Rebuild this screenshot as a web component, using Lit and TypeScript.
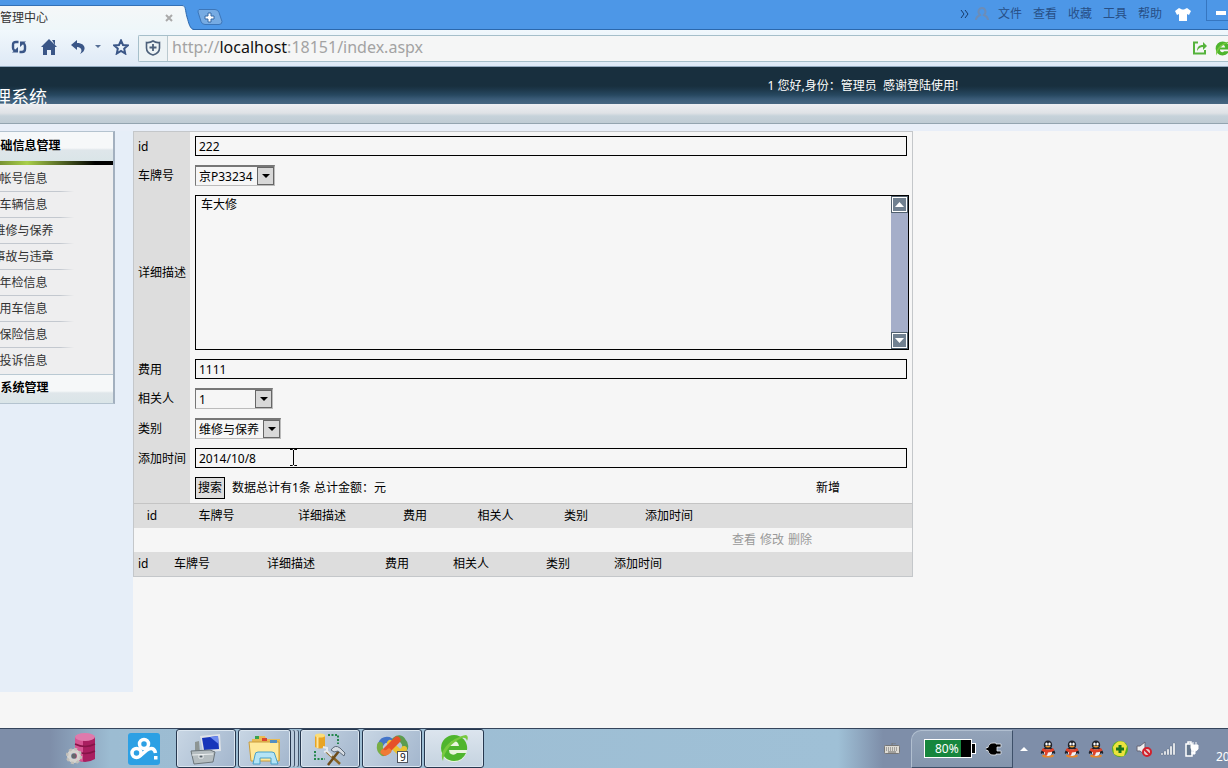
import { LitElement, html, css, svg } from "lit";
import { customElement } from "lit/decorators.js";

const downArrow = html`<svg width="8" height="4" viewBox="0 0 8 4"><path d="M0 0h8L4 4z" fill="#000" /></svg>`;

const penguin = html`<svg class="tray-icon" width="16" height="18" viewBox="0 0 16 18">
  <ellipse cx="8" cy="16" rx="6" ry="1.6" fill="#e8862a" />
  <path d="M1 14c-1-2 1-4 3-6h8c2 2 4 4 3 6l-2-1c-1 2-3 3-5 3s-4-1-5-3z" fill="#20242c" />
  <ellipse cx="8" cy="12.5" rx="4" ry="3.5" fill="#f4f4f4" />
  <ellipse cx="8" cy="5" rx="4.2" ry="4.6" fill="#20242c" />
  <ellipse cx="6.5" cy="4" rx="1.2" ry="1.6" fill="#fff" /><ellipse cx="9.5" cy="4" rx="1.2" ry="1.6" fill="#fff" />
  <path d="M5 6.5q3-1.4 6 0-3 2-6 0z" fill="#f0a030" />
  <path d="M3 8q5 3 10 0l1.500 2.500q-3 2-6.500 2l-1 3H5v-3l-3.500-2z" fill="#e0432a" />
</svg>`;

const browserIcon = svg`
  <path d="M14 1A13 13 0 1 0 14.100 27 13 13 0 0 0 26 19H17q-3 3-6 1-2-1-2-4h18A13 13 0 0 0 14 1zM9 12q1-5 5-5t5 5z" fill="#4fb52e" />
  <path d="M3 27C-2 18 10 4 26 1q3 1 1 6-1-4-5-3C12 8 4 17 3 27z" fill="#77c93f" />`;

@customElement("app-root")
export class AppRoot extends LitElement {
  static styles = css`
    :host {
      display: flex;
      flex-direction: column;
      height: 100vh;
      overflow: hidden;
      background: #f6f6f6;
      color: #000;
      font: 12px/16px "Noto Sans", "Noto Sans CJK SC", sans-serif;
    }
    * { box-sizing: border-box; }
    svg { display: block; flex: none; }
    a { color: inherit; text-decoration: none; }
    button, input, select, textarea { font: inherit; color: inherit; margin: 0; border-radius: 0; outline: 0; }
    .bare { border: 0; background: none; padding: 0; }

    .tabs { display: flex; flex: none; height: 30px; background: #4d97e7; border-bottom: 1px solid #2c68ad; }
    .tab {
      display: flex; align-items: center; justify-content: space-between;
      width: 182px; margin-top: 5px; height: 25px; padding-right: 9px;
      border-top: 1px solid #3470b5; background: linear-gradient(#f5f7f8, #eef7f9); color: #333;
    }
    .tab-edge { margin-top: 5px; }
    .new-tab { margin: 9px 0 0 3px; height: 17px; }
    .menu { display: flex; align-items: center; margin-left: auto; height: 28px; color: #274f86; gap: 11px; }
    .account { display: flex; align-items: center; gap: 6px; margin-right: -2px; }
    .shirt { margin: 0 3px 0 1px; }
    .minimize { width: 22px; height: 21px; align-self: flex-start; border-left: 1px solid #3676c0; border-bottom: 1px solid #3676c0; display: flex; align-items: center; justify-content: flex-end; padding: 5px 2px 0; }
    .minimize i { width: 10px; height: 4px; background: #fff; }
    .toolbar { display: flex; flex: none; height: 37px; align-items: center; padding-left: 11px; background: linear-gradient(#f1f8fc, #dee9f6); border-bottom: 1px solid #93abc0; }
    .tools { display: flex; align-items: center; gap: 14px; width: 127px; flex: none; padding-bottom: 3px; }
    .back { display: flex; align-items: center; gap: 10px; margin-right: -2px; }
    .address { display: flex; flex: 1; min-width: 0; height: 27px; background: #f5f6f6; border: 1px solid #a6bfca; border-right: 0; border-radius: 2px 0 0 2px; align-items: center; }
    .shield { width: 29px; height: 25px; display: grid; place-items: center; border-right: 1px solid #bac9cf; background: #edf3f5; }
    .url { flex: 1; padding: 0 0 2px 4px; font-size: 16px; line-height: 22px; color: #a3a3a3; white-space: nowrap; }
    .url b { font-weight: 400; color: #111; }
    .address-actions { display: flex; gap: 8px; }

    .banner { display: flex; flex: none; justify-content: space-between; height: 37px; overflow: hidden; color: #fff;
      background: linear-gradient(#182f3e 0 19px, #1c3648 22px, #274860 28px, #3a5b77 32px, #466681 37px); }
    .system { margin: 0; width: 47px; display: flex; justify-content: flex-end; padding-top: 18px; font-size: 18px; line-height: 24px; font-weight: 400; white-space: nowrap; }
    .greeting { margin: 11px 0 0; width: 37.500%; white-space: pre; }
    .band { flex: none; height: 20px; background: linear-gradient(#edeef2, #dfe2e6 9px, #c6d2da 12px, #bfcbd4); border-bottom: 1px solid #93a4b0; }

    .work { display: flex; flex: 1; min-height: 0; padding-top: 7px; margin-bottom: 36px; background: linear-gradient(#e8eef8 7px, #f6f6f6 7px); }
    .side { width: 133px; flex: none; overflow: hidden; background: #e6eef8; }
    .accordion { width: 182px; margin-left: -67px; border: 1px solid #b4c3cf; border-right: 2px solid #a3b0bf; background: #eeeeef; text-align: center; }
    .accordion h2 { margin: 0; font-size: 12px; line-height: 27px; height: 29px; font-weight: 700; background: linear-gradient(#f6f8f9 0 16px, #dfe6ea 18px, #dae5e8); padding-left: 2px; }
    .accordion h2.last { border-top: 1px solid #b9c9d3; line-height: 26px; }
    .stripe { height: 4px; background: linear-gradient(90deg, #000, #a9cf4a 52%, #000 90%); }
    .accordion ul { list-style: none; margin: 0; padding: 1px 0 0; }
    .accordion li { height: 26px; line-height: 25px; color: #333; border-bottom: 1px solid; border-image: linear-gradient(90deg, #c3c8cf 70%, #eeeeef 78%) 1; }
    .accordion li:last-child { border-image: none; border-color: transparent; }

    .panel { flex: 0 1 780px; align-self: flex-start; min-width: 0; border: 1px solid #c4c7ca; }
    .field { display: grid; grid-template-columns: 56px 1fr; }
    .field > label, .blank { display: flex; align-items: center; padding-left: 4px; background: #ddd; white-space: nowrap; }
    .value { padding: 4px 5px 5px; display: flex; }
    .text { width: 100%; height: 20px; border: 1px solid #000; background: #f6f6f6; padding: 0 3px; line-height: 18px; }
    .area-value { padding-right: 3px; }
    .area { display: flex; width: 100%; height: 155px; border: 1px solid #000; }
    .area textarea { flex: 1; min-width: 0; height: 100%; border: 0; padding: 1px 5px; resize: none; background: #f6f6f6; overflow: hidden; }
    .scroll { width: 17px; display: flex; flex-direction: column; justify-content: space-between; background: #a5aec9; }
    .scroll button { height: 17px; padding: 0; border: 1px solid #50606e; background: #708090; box-shadow: inset 0 0 0 1px #fff; display: grid; place-items: center; }
    .drop { display: grid; grid-template-columns: 1fr 18px; height: 21px; }
    .drop select { grid-area: 1 / 1 / 2 / 3; appearance: none; width: 100%; height: 21px; padding: 0 20px 0 3px; background: #f6f6f6; border: 1px solid #bbb; border-top: 2px solid #777; border-left-color: #777; line-height: 17px; }
    .drop span { grid-area: 1 / 2; z-index: 1; display: grid; place-items: center; margin: 2px 1px 1px 0; border: 1px solid #666; background: #d8d8d8; pointer-events: none; }
    .plate { width: 80px; }
    .person { width: 78px; }
    .kind { width: 86px; }
    .summary { align-items: center; padding-bottom: 4px; }
    .search { height: 22px; width: 30px; padding: 0; border: 1px solid #000; background: #ddd; white-space: nowrap; }
    .total { margin: 0 auto 0 7px; white-space: nowrap; }
    .add { margin-right: 67px; }
    table { width: 100%; table-layout: fixed; border-collapse: collapse; border-top: 1px solid #c4c4c4; }
    th, td { height: 24px; padding: 1px 4px 0; font-weight: 400; text-align: left; white-space: nowrap; }
    thead th { text-align: center; }
    thead, tfoot { background: #ddd; }
    .actions { color: #999; }
    .actions a { margin-right: 4px; }
    .c1 { width: 36px; } .c2 { width: 93px; } .c3 { width: 118px; } .c4 { width: 68px; }
    .caret { position: absolute; left: 289px; top: 449px; }

    .taskbar { display: flex; flex: none; height: 40px; border-top: 1px solid #35455c; background: linear-gradient(90deg, #7e8ea9 0 50px, #9cbcd2 110px, #9fc0d6 calc(100% - 390px), #7e8ea9 calc(100% - 345px)); }
    .pins { display: flex; align-items: center; padding-left: 66px; gap: 30px; width: 176px; flex: none; }
    .apps { display: flex; gap: 2px; }
    .app { width: 60px; height: 39px; display: grid; place-items: center; padding: 0; border: 1px solid #27384f; border-radius: 3px; background: linear-gradient(120deg, #c8d6e4, #a3b6cd); box-shadow: inset 0 0 0 1px #dbe6f0; }
    .app.stack { width: 53px; box-shadow: inset 0 0 0 1px #dbe6f0, 4px 0 0 -1px #b8cadc, 5px 0 0 -1px #41546c, 8px 0 0 -1px #b8cadc, 9px 0 0 -1px #41546c; margin-right: 7px; }
    .app.active { background: linear-gradient(#dce5ee, #c5d3e0); }
    .tray { display: flex; margin-left: auto; align-items: center; color: #fff; }
    .power { display: flex; align-items: center; gap: 10px; width: 102px; height: 38px; margin-left: 11px; padding-left: 12px; border: 1px solid #b1bfd0; border-right-color: #3e5069; border-bottom-color: #3e5069; border-radius: 10px 0 0 0; background: linear-gradient(#93a3b9, #8495ad); }
    .battery { display: flex; align-items: center; }
    .level { width: 48px; height: 19px; border: 1px solid #fff; background: linear-gradient(90deg, #16863d 36px, #000 36px); font-size: 12px; line-height: 17px; padding-left: 10px; }
    .tip { width: 4px; height: 11px; border: 1px solid #fff; border-left: 0; background: #000; }
    .icons { display: flex; align-items: center; gap: 8px; padding-left: 7px; }
    .expand { margin-right: 4px; }
    .clock { width: 12px; margin-left: 16px; overflow: hidden; align-self: flex-end; padding-bottom: 3px; }
  `;

  private menus = ["文件", "查看", "收藏", "工具", "帮助"];
  private links = ["帐号信息", "车辆信息", "维修与保养", "事故与违章", "年检信息", "用车信息", "保险信息", "投诉信息"];
  private columns = ["id", "车牌号", "详细描述", "费用", "相关人", "类别", "添加时间"];

  private chrome() {
    return html`
      <header class="tabs">
        <div class="tab"><span>管理中心</span>
          <button class="bare" aria-label="关闭"><svg width="8" height="8" viewBox="0 0 8 8"><path d="M1 1l6 6M7 1L1 7" stroke="#aaa" stroke-width="2" /></svg></button>
        </div>
        <svg class="tab-edge" width="12" height="25" viewBox="0 0 12 25"><path d="M0 0C4 0 3 5 5 12S8 24 12 25H0z" fill="#f2f7f9" /><path d="M0 .5C4 .5 3 5 5 12s3 12 7 12.500" fill="none" stroke="#2c68ad" /></svg>
        <button class="bare new-tab" aria-label="新标签"><svg width="26" height="17" viewBox="0 0 26 17">
          <path d="M2 .5h16q3 0 4 3l3 9q0 3-3 3H8q-3 0-4-3L1 3Q1 1 2 .5z" fill="#76abe3" stroke="#3c76b9" />
          <path d="M11 4h3v3h3v3h-3v3h-3v-3H8V7h3z" fill="#fff" stroke="#3468a5" /></svg></button>
        <nav class="menu">
          <span class="account">
            <svg width="9" height="8" viewBox="0 0 9 8"><path d="M1 0l3 4-3 4M5 0l3 4-3 4" fill="none" stroke="#173a68" /></svg>
            <svg width="14" height="14" viewBox="0 0 14 14"><path d="M1 13c0-3 2-4 4-5-3-3-1-7 2-7s5 4 2 7c2 1 4 2 4 5" fill="none" stroke="#6c8db8" stroke-width="2" /></svg>
          </span>
          ${this.menus.map((m) => html`<a href="#">${m}</a>`)}
          <svg class="shirt" width="18" height="14" viewBox="0 0 18 14"><path d="M5 1l2 1q2 1 4 0l2-1 4 3-2 4-2-1v7H5V7L3 8 1 4z" fill="#fff" /></svg>
          <button class="bare minimize" aria-label="最小化"><i></i></button>
        </nav>
      </header>
      <div class="toolbar">
        <div class="tools">
          <svg width="16" height="14" viewBox="0 0 16 14"><g fill="none" stroke="#3a5687" stroke-width="2.400"><path d="M7.500 2H5Q2 2 2 5v3q0 2 2 3" /><path d="M8.500 12H11q3 0 3-3V6q0-2-2-3" /></g><path d="M1 12.500h6V7zM15 1.500H9V7z" fill="#3a5687" /></svg>
          <svg width="16" height="16" viewBox="0 0 16 16"><path d="M8 0l8 8h-2v8h-4v-5H6v5H2V8H0zM11 1h3v5z" fill="#3a5687" /></svg>
          <span class="back">
            <svg width="14" height="14" viewBox="0 0 14 14"><path d="M0 5l6-5v3c9 0 10 8 3 11 3-4 1-7-3-7v3z" fill="#3a5687" /></svg>
            <svg width="6" height="3" viewBox="0 0 6 3"><path d="M0 0h6L3 3z" fill="#556e95" /></svg>
          </span>
          <svg width="16" height="16" viewBox="0 0 16 16"><path d="M8 1.500l2 4.500 4.800.4-3.600 3.200 1 4.900L8 12l-4.200 2.500 1-4.900L1.200 6.400 6 6z" fill="none" stroke="#3a5687" stroke-width="2" /></svg>
        </div>
        <div class="address">
          <div class="shield"><svg width="16" height="16" viewBox="0 0 16 16"><path d="M8 1q3 2 6.500 1.500V8c0 4-3 6-6.500 7-3.500-1-6.500-3-6.500-7V2.500Q5 3 8 1z" fill="none" stroke="#4c607a" stroke-width="1.600" /><path d="M8 4v7M4.500 7.500h7" stroke="#4c607a" stroke-width="1.800" /></svg></div>
          <span class="url">http://<b>localhost</b>:18151/index.aspx</span>
          <div class="address-actions">
            <svg width="14" height="14" viewBox="0 0 14 14"><path d="M5 1.500H1v11h11V9" fill="none" stroke="#55b33c" stroke-width="2" /><path d="M4 10c0-4 2-6 6-6V1l4 4-4 4V6c-3 0-4 1-6 4z" fill="#55b33c" /></svg>
            <svg width="13" height="15" viewBox="0 0 24 28">${browserIcon}</svg>
          </div>
        </div>
      </div>`;
  }

  private side() {
    return html`<aside class="side"><nav class="accordion">
      <h2>基础信息管理</h2>
      <div class="stripe"></div>
      <ul>${this.links.map((l) => html`<li><a href="#">${l}</a></li>`)}</ul>
      <h2 class="last">系统管理</h2>
    </nav></aside>`;
  }

  private textField(id: string, label: string, value: string) {
    return html`<div class="field"><label for=${id}>${label}</label><div class="value"><input class="text" id=${id} .value=${value} /></div></div>`;
  }

  private dropField(id: string, label: string, value: string) {
    return html`<div class="field"><label for=${id}>${label}</label><div class="value">
      <div class="drop ${id}"><select id=${id}><option>${value}</option></select><span>${downArrow}</span></div></div></div>`;
  }

  private panel() {
    return html`<main class="panel">
      ${this.textField("record", "id", "222")}
      ${this.dropField("plate", "车牌号", "京P33234")}
      <div class="field"><label for="detail">详细描述</label><div class="value area-value"><div class="area">
        <textarea id="detail" .value=${"车大修"}></textarea>
        <div class="scroll">
          <button aria-label="向上"><svg width="9" height="5" viewBox="0 0 9 5"><path d="M0 5h9L4.500 0z" fill="#fff" /></svg></button>
          <button aria-label="向下"><svg width="9" height="5" viewBox="0 0 9 5"><path d="M0 0h9L4.500 5z" fill="#fff" /></svg></button>
        </div></div></div></div>
      ${this.textField("cost", "费用", "1111")}
      ${this.dropField("person", "相关人", "1")}
      ${this.dropField("kind", "类别", "维修与保养")}
      ${this.textField("added", "添加时间", "2014/10/8")}
      <div class="field"><div class="blank"></div><div class="value summary">
        <button class="search">搜索</button><span class="total">数据总计有1条 总计金额：元</span><a class="add" href="#">新增</a>
      </div></div>
      <table>
        <colgroup><col class="c1" /><col class="c2" /><col class="c3" /><col class="c4" /><col class="c2" /><col class="c4" /><col class="c3" /><col /></colgroup>
        <thead><tr>${this.columns.map((c) => html`<th scope="col">${c}</th>`)}<th></th></tr></thead>
        <tbody><tr><td colspan="7"></td><td class="actions"><a href="#">查看</a><a href="#">修改</a><a href="#">删除</a></td></tr></tbody>
        <tfoot><tr>${this.columns.map((c) => html`<td>${c}</td>`)}<td></td></tr></tfoot>
      </table>
    </main>`;
  }

  private taskbar() {
    return html`<footer class="taskbar">
      <div class="pins">
        <svg width="32" height="34" viewBox="0 0 32 34">
          <path d="M9 5v22q10 6 20 0V5z" fill="#a91f60" /><path d="M9 5v22q4 2 8 3V7z" fill="#d65593" />
          <ellipse cx="19" cy="5" rx="10" ry="4" fill="#e07aac" /><path d="M9 12q10 5 20 0M9 19q10 5 20 0" fill="none" stroke="#861447" stroke-width="1.500" />
          <circle cx="8" cy="24" r="5" fill="none" stroke="#d5d3cf" stroke-width="4" /><circle cx="8" cy="24" r="7" fill="none" stroke="#c2bfb9" stroke-width="2.500" stroke-dasharray="3 2.500" /><circle cx="8" cy="24" r="2.500" fill="#66666a" />
        </svg>
        <svg width="32" height="32" viewBox="0 0 32 32"><rect width="32" height="32" rx="3" fill="#2ca0e4" /><g fill="none" stroke="#fff" stroke-width="3.500"><circle cx="16" cy="11" r="4.500" /><circle cx="8.500" cy="20" r="4.500" /><path d="M12 23l7-6q7-4 8.500 3" /></g><rect x="26" y="23" width="3.500" height="3.500" fill="#fff" /></svg>
      </div>
      <div class="apps">
        <button class="app" aria-label="计算机"><svg width="32" height="32" viewBox="0 0 32 32">
          <path d="M10 3l20-2 1 17-18 1z" fill="#dfe3e8" /><path d="M12 5l16-2 1 13-15 1z" fill="#1735ba" /><path d="M20 4l8-1 .6 8z" fill="#6e8bef" />
          <path d="M5 9l4-1 1 12H5z" fill="#8d9594" /><path d="M1 18l19-1 5 2-2 10-19 2z" fill="#b5bdc0" stroke="#6c757a" /><path d="M2 22l21-1M9 22h4v3H9z" stroke="#eef1f2" fill="#57636b" /></svg></button>
        <button class="app stack" aria-label="文件夹"><svg width="34" height="32" viewBox="0 0 34 32">
          <path d="M4 6h4l1-3h8l1 3h14v22H3z" fill="#e9bc55" /><path d="M1 9h30v19H3z" fill="#ffe99a" stroke="#c99c3c" /><path d="M7 3h4v3H7z" fill="#38a34d" /><path d="M14 5h5v3h-5z" fill="#db4530" /><path d="M22 7h7v3h-7z" fill="#548fc2" />
          <path d="M7 22q0-3 3-3h14q3 0 3 3l3 9h-7v-6H12v6H5z" fill="#b4e4f5" stroke="#47a0c9" /></svg></button>
        <button class="app" aria-label="工具"><svg width="34" height="34" viewBox="0 0 34 34">
          <path d="M2 3v12q5 3 10 0V3z" fill="#e8a423" /><ellipse cx="7" cy="3.500" rx="5" ry="2" fill="#fbdd78" /><path d="M4.500 5v11" stroke="#ffe49a" stroke-width="2" />
          <path d="M15 3h10v9M2 19v8h10" fill="none" stroke="#24874d" stroke-width="2" stroke-dasharray="2 1.500" />
          <path d="M13 19l14 13" stroke="#8a6425" stroke-width="2.500" /><path d="M26 19L15 33" stroke="#6d4c1b" stroke-width="2.500" /><path d="M10 15l4 1v3l-3 1M13 18l6 6" fill="none" stroke="#e6eaee" stroke-width="2" /><path d="M18 18q4-6 9-2l5 5-1 3-6-5-4 1z" fill="#d6dce3" stroke="#5d6a79" /></svg></button>
        <button class="app" aria-label="开发工具"><svg width="34" height="30" viewBox="0 0 34 30"><g fill="none" stroke-width="6" stroke-linecap="round">
          <path d="M6 10q2-5 8-4l3 2" stroke="#4475c9" /><path d="M5 11q-1 5 3 8" stroke="#78ad45" />
          <path d="M20 6q5-4 8 1 3 3 2 7" stroke="#5c9c50" /><path d="M15 9l8 8q5 2 6-2" stroke="#ecc331" /><path d="M10 18L22 6" stroke="#e6512a" stroke-width="7" /><path d="M8 18q3 2 6-1" stroke="#f07b35" stroke-width="5" /></g>
          <rect x="22.500" y="17.500" width="10" height="11" fill="#fff" stroke="#50545d" /><text x="25" y="27" font-size="10" fill="#111">9</text></svg></button>
        <button class="app active" aria-label="浏览器"><svg width="30" height="31" viewBox="-1 -1 30 31"><circle cx="14" cy="15" r="13" fill="#e9f5dd" />${browserIcon}</svg></button>
      </div>
      <div class="tray">
        <svg width="16" height="11" viewBox="0 0 16 11"><rect x=".5" y="2.500" width="15" height="8" rx="1" fill="#dedbd4" stroke="#777" /><path d="M2 5h12M2 7h12" stroke="#666" stroke-dasharray="1 1" /><path d="M4 9h8" stroke="#666" /><path d="M8 2V0h4" fill="none" stroke="#777" /></svg>
        <div class="power">
          <div class="battery"><span class="level">80%</span><i class="tip"></i></div>
          <svg width="16" height="14" viewBox="0 0 16 14"><path d="M0 5.500h2Q3 1 7 1h3v1h5v3h-4v4h4v3h-5v1H7Q3 13 2 8.500H0z" fill="#000" stroke="#e5e9ee" stroke-width=".8" /></svg>
        </div>
        <div class="icons">
          <svg class="expand" width="8" height="4" viewBox="0 0 8 4"><path d="M0 4h8L4 0z" fill="#fff" /></svg>
          ${penguin}${penguin}${penguin}
          <svg width="16" height="16" viewBox="0 0 16 16"><circle cx="8" cy="8" r="8" fill="#58ad20" /><path d="M1 6Q5-2 12 1l3 4-3 10Q6 16 2 13z" fill="#ece33c" /><path d="M8 4v8M4 8h8" stroke="#19741b" stroke-width="3" /></svg>
          <svg width="16" height="16" viewBox="0 0 16 16"><path d="M1 5h3l5-4v13l-5-4H1z" fill="#eee" stroke="#667" /><circle cx="11" cy="11" r="4" fill="#ead0d0" stroke="#d3202b" stroke-width="2" /><path d="M8 8l6 6" stroke="#d3202b" stroke-width="2" /></svg>
          <svg width="16" height="14" viewBox="0 0 16 14"><path d="M1 11h2v2H1zM4 9h2v4H4zM7 7h2v6H7zM10 4h2v9h-2zM13 1h2v12h-2z" fill="#fff" stroke="#5d6d82" stroke-width=".4" /></svg>
          <svg width="16" height="16" viewBox="0 0 16 16"><path d="M2 3h6v12H2zM4 1h3v2H4z" fill="#66788e" stroke="#fff" stroke-width="1.500" /><path d="M7 4h7v4q-1 2-3 2v3H8v-2h2v-1Q7 9 7 7zM9 1v3M12 1v3" fill="#fff" stroke="#fff" /></svg>
        </div>
        <span class="clock">20</span>
      </div>
    </footer>`;
  }

  render() {
    return html`
      ${this.chrome()}
      <div class="banner"><h1 class="system">理系统</h1><p class="greeting">1 您好,身份：管理员  感谢登陆使用!</p></div>
      <div class="band"></div>
      <div class="work">${this.side()}${this.panel()}</div>
      ${this.taskbar()}
      <svg class="caret" width="9" height="17" viewBox="0 0 9 17"><path d="M1 .5h2.500l1 1 1-1H8M1 16.500h2.500l1-1 1 1H8M4.500 1v15" fill="none" stroke="#000" /></svg>`;
  }
}
